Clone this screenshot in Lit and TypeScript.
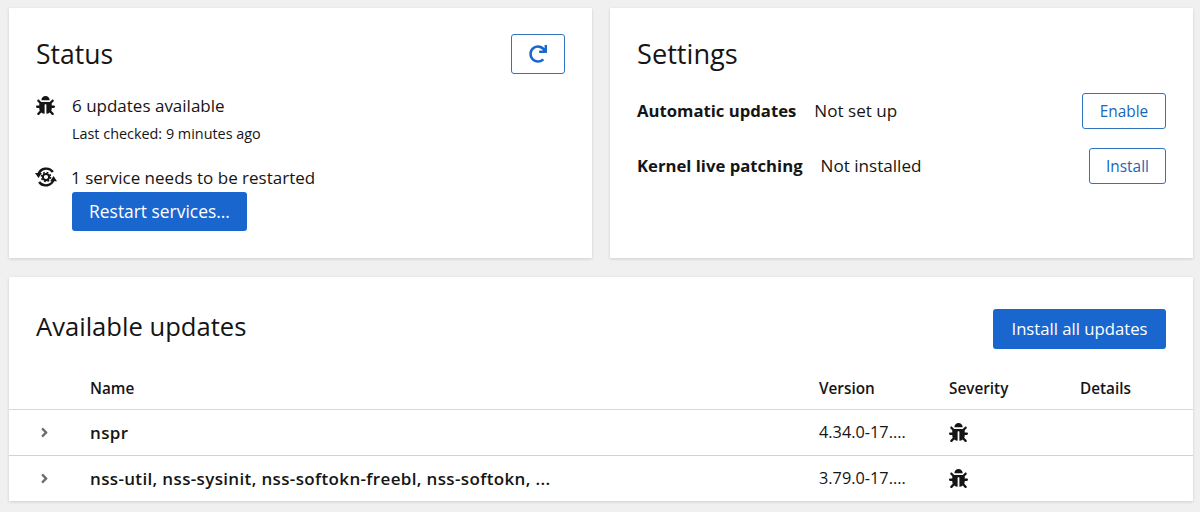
import { LitElement, html, css, svg } from "lit";
import { customElement } from "lit/decorators.js";

const bug = svg`<path d="M511.988 288.9c-.478 17.43-15.217 31.1-32.653 31.1H424v16c0 21.864-4.882 42.584-13.6 61.145l60.228 60.228c12.496 12.497 12.496 32.758 0 45.255-12.498 12.497-32.759 12.496-45.256 0l-54.736-54.736C345.886 467.965 314.351 480 280 480V236c0-6.627-5.373-12-12-12h-24c-6.627 0-12 5.373-12 12v244c-34.351 0-65.886-12.035-90.636-32.108l-54.736 54.736c-12.498 12.497-32.759 12.496-45.256 0-12.496-12.497-12.496-32.758 0-45.255l60.228-60.228C92.882 378.584 88 357.864 88 336v-16H32.666C15.23 320 .491 306.33.013 288.9-.484 270.816 14.028 256 32 256h56v-58.745l-46.628-46.628c-12.496-12.497-12.496-32.758 0-45.255 12.498-12.497 32.758-12.497 45.256 0L141.255 160h229.489l54.627-54.627c12.498-12.497 32.758-12.497 45.256 0 12.496 12.497 12.496 32.758 0 45.255L424 197.255V256h56c17.972 0 32.484 14.816 31.988 32.9zM257 0c-61.856 0-112 50.144-112 112h224C369 50.144 318.856 0 257 0z"/>`;
const redo = svg`<path d="M500.33 0h-47.41a12 12 0 0 0-12 12.57l4 82.76A247.42 247.42 0 0 0 256 8C119.34 8 7.9 119.53 8 256.19 8.1 393.07 119.1 504 256 504a247.1 247.1 0 0 0 166.18-63.91 12 12 0 0 0 .48-17.43l-34-34a12 12 0 0 0-16.38-.55A176 176 0 1 1 402.1 157.8l-101.53-4.87a12 12 0 0 0-12.57 12v47.41a12 12 0 0 0 12 12h200.33a12 12 0 0 0 12-12V12a12 12 0 0 0-12-12z"/>`;
const angle = svg`<path d="M224.3 273l-136 136c-9.4 9.4-24.6 9.4-33.9 0l-22.6-22.6c-9.4-9.4-9.4-24.6 0-33.9l96.4-96.4-96.4-96.4c-9.4-9.4-9.4-24.6 0-33.9L54.3 103c9.4-9.4 24.6-9.4 33.9 0l136 136c9.5 9.4 9.5 24.6.1 34z"/>`;

@customElement("app-root")
export class AppRoot extends LitElement {
  static styles = css`
    :host {
      display: block;
      height: 512px;
      box-sizing: border-box;
      padding: 8px 7px 0 9px;
      background: #f0f0f0;
      font-family: "Open Sans", "Liberation Sans", sans-serif;
      color: #151515;
      font-size: 17px;
      overflow: hidden;
    }
    .page { display: grid; grid-template-columns: 583px 583px; column-gap: 18px; row-gap: 19px; }
    .card { background: #fff; box-shadow: 0 1px 3px rgba(3,3,3,.14); box-sizing: border-box; }
    .top { height: 250px; padding: 26px 27px 0; }
    .wide { grid-column: 1 / 3; height: 224px; display: flex; flex-direction: column; }
    .head { display: flex; justify-content: space-between; align-items: flex-start; }
    h2 { margin: 0; font-weight: 400; font-size: 27.2px; line-height: 40px; }
    .title-status { font-size: 26.5px; }
    button {
      font: inherit; border-radius: 3px; box-sizing: border-box; display: flex;
      align-items: center; justify-content: center; padding: 0; cursor: pointer;
    }
    .primary { background: #1a66cf; border: none; color: #fff; }
    .outline { background: #fff; border: 1px solid #2f74bd; color: #1a66b8; }
    .refresh { width: 54px; height: 40px; }
    .refresh svg { width: 18px; height: 18px; fill: #1a66cf; }
    .status-row { display: flex; column-gap: 17px; }
    .ico { width: 19px; height: 19px; fill: #151515; flex: none; display: block; }
    .r1 { margin-top: 20px; }
    .line { line-height: 24px; height: 24px; }
    .small { font-size: 14.4px; line-height: 20px; margin-top: 6px; }
    .r2 { margin-top: 22px; column-gap: 14px; margin-left: -1px; }
    .r2 .ico { width: 22px; height: 22px; margin-top: 0; }
    .r2 .restart { margin-left: 1px; }
    .r1 .ico { margin-top: 2px; }
    .restart { width: 175px; height: 39px; margin-top: 2px; font-size: 17.4px; padding-bottom: 1px; }
    .set { display: flex; align-items: center; height: 36px; }
    .set.first { margin-top: 19px; }
    .set.second { margin-top: 19px; }
    .set b { font-weight: 700; margin-right: 18px; font-size: 16.7px; padding-bottom: 2px; }
    .set span { padding-bottom: 2px; font-size: 17.1px; }
    .set button { margin-left: auto; height: 36px; font-size: 15.4px; }
    .enable { width: 84px; }
    .install { width: 77px; }
    .wide .head { padding: 32px 27px 0; height: 90px; box-sizing: border-box; align-items: flex-start; }
    .wide h2 { font-size: 25.6px; line-height: 36px; }
    .all { width: 173px; height: 40px; font-size: 16.7px; padding-bottom: 1px; }
    .row {
      display: grid; grid-template-columns: 81px 729px 130px 131px 1fr;
      align-items: center; border-bottom: 1px solid #d2d2d2;
    }
    .hdr { height: 43px; font-weight: 600; font-size: 15.3px; border-bottom: 1px solid #d8d8d8; box-sizing: border-box; }
    .item { height: 46px; box-sizing: border-box; padding-bottom: 1px; }
    .item.last { height: 45px; border-bottom: none; }
    .name { font-weight: 600; font-size: 17px; letter-spacing: .35px; }
    .ver { font-size: 16.3px; }
    .chev { width: 11px; height: 15px; fill: #6a6e73; margin-left: 30px; display: block; }
    .sev { width: 19px; height: 19px; fill: #151515; display: block; }
  `;

  private restartIcon() {
    return html`<svg class="ico" viewBox="0 0 24 24">
      <g fill="none" stroke="#151515">
        <path d="M3.600 9.500A9 9 0 0 1 19.500 6.500" stroke-width="2.600"/>
        <path d="M20.400 14.500A9 9 0 0 1 4.500 17.500" stroke-width="2.600"/>
        <circle cx="12" cy="12" r="3.400" stroke-width="2.200"/>
        <circle cx="12" cy="12" r="5" stroke-width="1.600" stroke-dasharray="2 1.930"/>
      </g>
      <path d="M0 7.500h7.500L3.800 13zM24 16.500h-7.500L20.200 11z" fill="#151515"/>
    </svg>`;
  }

  private bugIcon(cls: string) {
    return html`<svg class=${cls} viewBox="0 0 512 512">${bug}</svg>`;
  }

  private item(name: string, ver: string, last = false) {
    return html`<div class="row item ${last ? "last" : ""}">
      <svg class="chev" viewBox="0 0 256 512">${angle}</svg>
      <div class="name">${name}</div>
      <div class="ver">${ver}</div>
      <div>${this.bugIcon("sev")}</div>
      <div></div>
    </div>`;
  }

  render() {
    return html`<div class="page">
      <section class="card top">
        <div class="head">
          <h2 class="title-status">Status</h2>
          <button class="outline refresh" aria-label="Refresh"><svg viewBox="0 0 512 512">${redo}</svg></button>
        </div>
        <div class="status-row r1">
          ${this.bugIcon("ico")}
          <div>
            <div class="line">6 updates available</div>
            <div class="small">Last checked: 9 minutes ago</div>
          </div>
        </div>
        <div class="status-row r2">
          ${this.restartIcon()}
          <div>
            <div class="line">1 service needs to be restarted</div>
            <button class="primary restart">Restart services...</button>
          </div>
        </div>
      </section>
      <section class="card top">
        <h2>Settings</h2>
        <div class="set first"><b>Automatic updates</b><span>Not set up</span><button class="outline enable">Enable</button></div>
        <div class="set second"><b>Kernel live patching</b><span>Not installed</span><button class="outline install">Install</button></div>
      </section>
      <section class="card wide">
        <div class="head">
          <h2>Available updates</h2>
          <button class="primary all">Install all updates</button>
        </div>
        <div class="row hdr"><div></div><div>Name</div><div>Version</div><div>Severity</div><div>Details</div></div>
        ${this.item("nspr", "4.34.0-17....")}
        ${this.item("nss-util, nss-sysinit, nss-softokn-freebl, nss-softokn, ...", "3.79.0-17....", true)}
      </section>
    </div>`;
  }
}
